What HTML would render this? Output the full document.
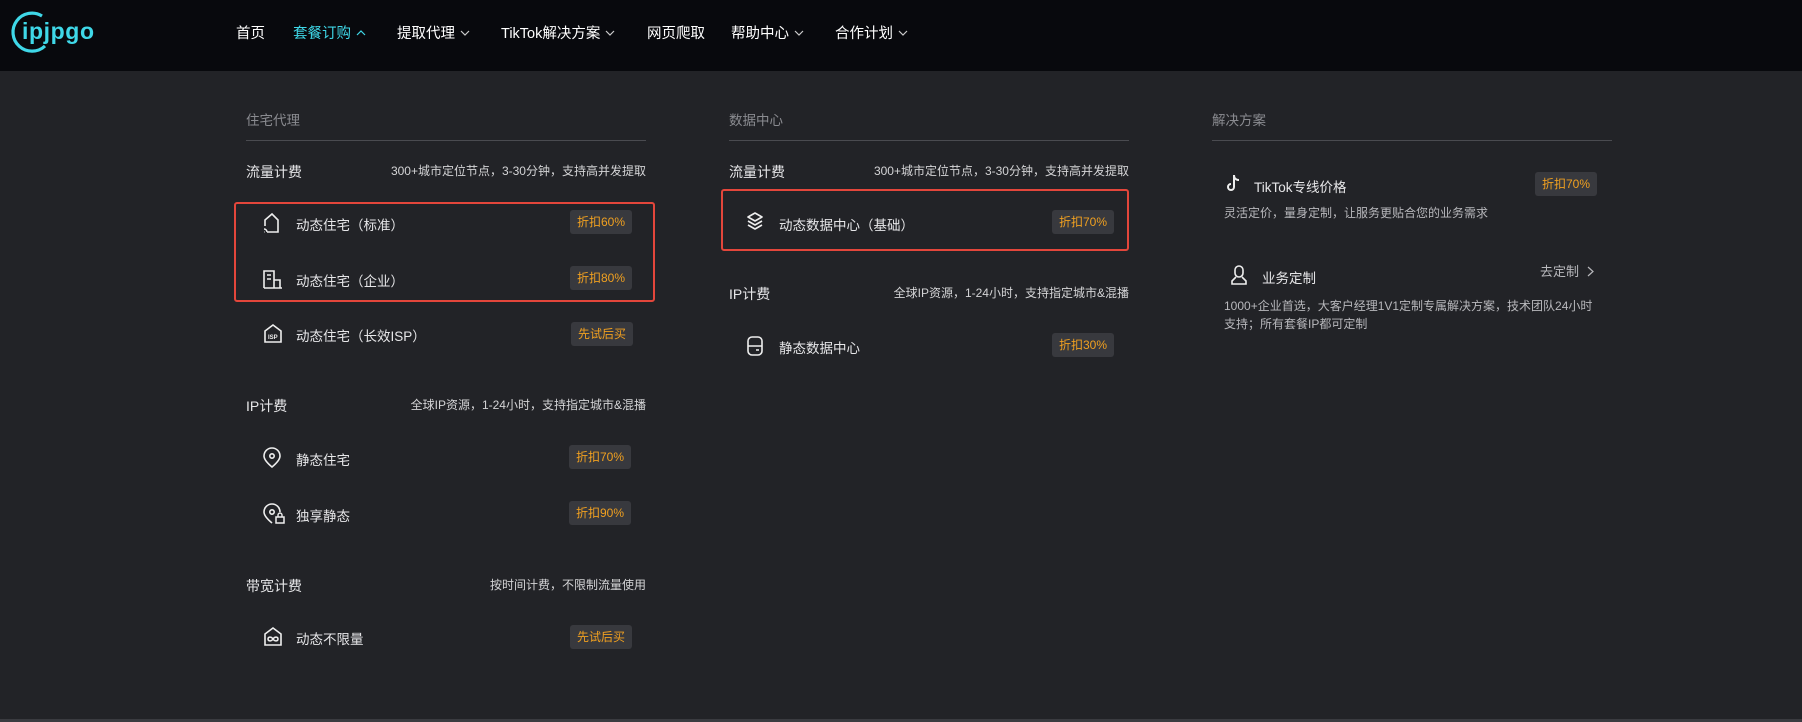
<!DOCTYPE html>
<html><head><meta charset="utf-8">
<style>
*{margin:0;padding:0;box-sizing:border-box}
body{width:1802px;height:722px;background:#222327;font-family:"Liberation Sans","Noto Sans CJK SC",sans-serif;position:relative;overflow:hidden;color:#e8e8ea}
.nav{position:absolute;left:0;top:0;width:1802px;height:71px;background:#08090d}
.a{position:absolute;white-space:nowrap}
.n{font-size:14.5px;color:#fff;top:22px}
.n svg{margin-left:5px;vertical-align:2px}
.h{font-size:13.5px;color:#8a8b90}
.line{position:absolute;height:1px;background:#4a4b50}
.t{font-size:14px;color:#e6e6e8}
.d{font-size:12px;color:#d4d4d6}
.it{font-size:13.5px;color:#e6e6e8}
.b{position:absolute;height:24px;line-height:24px;padding:0 7px;background:#38393e;border-radius:3px;color:#f0a020;font-size:12px;white-space:nowrap}
.red{position:absolute;border:2px solid #e3463b;border-radius:3px}
.ic{position:absolute}
.g{font-size:12px;color:#b8b8bc;line-height:18px}
</style></head><body>
<div class="nav"></div>
<svg class="ic" style="left:8px;top:9px" width="100" height="46" viewBox="0 0 100 46">
<path d="M34 7 A19 19 0 1 0 37 37" stroke="#3fd8e8" stroke-width="3.2" fill="none"/>
<text x="14" y="30" fill="#3fd8e8" font-family="Liberation Sans" font-weight="bold" font-size="23" textLength="72">ipjpgo</text>
</svg>
<div class="a n" style="left:236px">首页</div>
<div class="a n" style="left:293px;color:#3fd8e8">套餐订购<svg width="10" height="6" viewBox="0 0 10 6"><path d="M1 5 5 1 9 5" stroke="#3fd8e8" stroke-width="1.2" fill="none"/></svg></div>
<div class="a n" style="left:397px">提取代理<svg width="10" height="6" viewBox="0 0 10 6"><path d="M1 1 5 5 9 1" stroke="#ccc" stroke-width="1.2" fill="none"/></svg></div>
<div class="a n" style="left:501px">TikTok解决方案<svg width="10" height="6" viewBox="0 0 10 6"><path d="M1 1 5 5 9 1" stroke="#ccc" stroke-width="1.2" fill="none"/></svg></div>
<div class="a n" style="left:647px">网页爬取</div>
<div class="a n" style="left:731px">帮助中心<svg width="10" height="6" viewBox="0 0 10 6"><path d="M1 1 5 5 9 1" stroke="#ccc" stroke-width="1.2" fill="none"/></svg></div>
<div class="a n" style="left:835px">合作计划<svg width="10" height="6" viewBox="0 0 10 6"><path d="M1 1 5 5 9 1" stroke="#ccc" stroke-width="1.2" fill="none"/></svg></div>

<!-- col1 -->
<div class="a h" style="left:246px;top:109px">住宅代理</div>
<div class="line" style="left:246px;top:140px;width:400px"></div>
<div class="a t" style="left:246px;top:162px">流量计费</div>
<div class="a d" style="right:1156px;top:162px">300+城市定位节点，3-30分钟，支持高并发提取</div>
<div class="red" style="left:234px;top:202px;width:421px;height:100px"></div>
<svg class="ic" style="left:262px;top:212px" width="20" height="22" viewBox="0 0 20 22"><path d="M5 20H16V8L10 2 3 8V14" stroke="#eee" stroke-width="1.6" fill="none"/><path d="M2 17a3 3 0 0 1 3 3M2 20h.5" stroke="#eee" stroke-width="1.5" fill="none"/></svg>
<div class="a it" style="left:296px;top:214px">动态住宅（标准）</div>
<div class="b" style="left:570px;top:210px">折扣60%</div>
<svg class="ic" style="left:262px;top:268px" width="22" height="22" viewBox="0 0 22 22"><path d="M2 20V3h10v17M2 20h18M12 12h6v8M5 7h4M5 11h4" stroke="#eee" stroke-width="1.6" fill="none"/></svg>
<div class="a it" style="left:296px;top:270px">动态住宅（企业）</div>
<div class="b" style="left:570px;top:266px">折扣80%</div>
<svg class="ic" style="left:262px;top:323px" width="22" height="22" viewBox="0 0 22 22"><path d="M11 2 19 8V19H3V8Z" stroke="#eee" stroke-width="1.6" fill="none"/><text x="6" y="16" font-size="6" fill="#eee" font-family="Liberation Sans" font-weight="bold">ISP</text></svg>
<div class="a it" style="left:296px;top:325px">动态住宅（长效ISP）</div>
<div class="b" style="left:571px;top:322px">先试后买</div>

<div class="a t" style="left:246px;top:396px">IP计费</div>
<div class="a d" style="right:1156px;top:396px">全球IP资源，1-24小时，支持指定城市&amp;混播</div>
<svg class="ic" style="left:262px;top:447px" width="20" height="22" viewBox="0 0 20 22"><path d="M10 20C4 15 2 12 2 9a8 8 0 0 1 16 0c0 3-2 6-8 11Z" stroke="#eee" stroke-width="1.6" fill="none"/><circle cx="10" cy="9" r="2.2" stroke="#eee" stroke-width="1.6" fill="none"/></svg>
<div class="a it" style="left:296px;top:449px">静态住宅</div>
<div class="b" style="left:569px;top:445px">折扣70%</div>
<svg class="ic" style="left:262px;top:503px" width="24" height="22" viewBox="0 0 24 22"><path d="M10 20C4 15 2 12 2 9a8 8 0 0 1 16 0" stroke="#eee" stroke-width="1.6" fill="none"/><circle cx="10" cy="9" r="2.2" stroke="#eee" stroke-width="1.6" fill="none"/><rect x="14" y="14" width="8" height="6" stroke="#eee" stroke-width="1.5" fill="none"/><path d="M16 14v-2a2 2 0 0 1 4 0v2" stroke="#eee" stroke-width="1.4" fill="none"/></svg>
<div class="a it" style="left:296px;top:505px">独享静态</div>
<div class="b" style="left:569px;top:501px">折扣90%</div>

<div class="a t" style="left:246px;top:576px">带宽计费</div>
<div class="a d" style="right:1156px;top:576px">按时间计费，不限制流量使用</div>
<svg class="ic" style="left:262px;top:626px" width="22" height="22" viewBox="0 0 22 22"><path d="M11 2 19 8V19H3V8Z" stroke="#eee" stroke-width="1.6" fill="none"/><path d="M11 13c-2-3-5-2-5 0s3 3 5 0c2-3 5-2 5 0s-3 3-5 0" stroke="#eee" stroke-width="1.5" fill="none"/></svg>
<div class="a it" style="left:296px;top:628px">动态不限量</div>
<div class="b" style="left:570px;top:625px">先试后买</div>

<!-- col2 -->
<div class="a h" style="left:729px;top:109px">数据中心</div>
<div class="line" style="left:729px;top:140px;width:400px"></div>
<div class="a t" style="left:729px;top:162px">流量计费</div>
<div class="a d" style="right:673px;top:162px">300+城市定位节点，3-30分钟，支持高并发提取</div>
<div class="red" style="left:721px;top:189px;width:408px;height:62px"></div>
<svg class="ic" style="left:745px;top:211px" width="20" height="22" viewBox="0 0 20 22"><path d="M10 2 17 6 10 10 3 6Z M3 10l7 4 7-4M3 14l7 4 7-4" stroke="#eee" stroke-width="1.6" fill="none" stroke-linejoin="round"/></svg>
<div class="a it" style="left:779px;top:214px">动态数据中心（基础）</div>
<div class="b" style="left:1052px;top:210px">折扣70%</div>
<div class="a t" style="left:729px;top:284px">IP计费</div>
<div class="a d" style="right:673px;top:284px">全球IP资源，1-24小时，支持指定城市&amp;混播</div>
<svg class="ic" style="left:745px;top:335px" width="20" height="22" viewBox="0 0 20 22"><rect x="3" y="2" width="14" height="18" rx="4" stroke="#eee" stroke-width="1.6" fill="none"/><path d="M3 11h14M11 15h3" stroke="#eee" stroke-width="1.6"/></svg>
<div class="a it" style="left:779px;top:337px">静态数据中心</div>
<div class="b" style="left:1052px;top:333px">折扣30%</div>

<!-- col3 -->
<div class="a h" style="left:1212px;top:109px">解决方案</div>
<div class="line" style="left:1212px;top:140px;width:400px"></div>
<svg class="ic" style="left:1226px;top:173px" width="16" height="20" viewBox="0 0 16 20"><path d="M8 2v12a3 3 0 1 1-3-3M8 2c0 3 2 5 5 5" stroke="#eee" stroke-width="2" fill="none"/></svg>
<div class="a it" style="left:1254px;top:176px">TikTok专线价格</div>
<div class="b" style="left:1535px;top:172px">折扣70%</div>
<div class="a g" style="left:1224px;top:204px">灵活定价，量身定制，让服务更贴合您的业务需求</div>
<svg class="ic" style="left:1229px;top:264px" width="20" height="22" viewBox="0 0 20 22"><path d="M10 2a4 4 0 0 1 4 4v3a4 4 0 0 1-8 0V6a4 4 0 0 1 4-4ZM7 13l-4 4v3h14v-3l-4-4" stroke="#eee" stroke-width="1.6" fill="none"/></svg>
<div class="a it" style="left:1262px;top:267px">业务定制</div>
<div class="a" style="left:1540px;top:261px;font-size:13px;color:#b8b8bc">去定制<svg style="margin-left:8px;vertical-align:-1px" width="7" height="11" viewBox="0 0 7 11"><path d="M1 1 6 5.5 1 10" stroke="#b8b8bc" stroke-width="1.2" fill="none"/></svg></div>
<div class="a g" style="left:1224px;top:297px;width:380px;white-space:normal">1000+企业首选，大客户经理1V1定制专属解决方案，技术团队24小时支持；所有套餐IP都可定制</div>
<div style="position:absolute;left:0;top:719px;width:1802px;height:3px;background:#3a3b40"></div>
</body></html>
